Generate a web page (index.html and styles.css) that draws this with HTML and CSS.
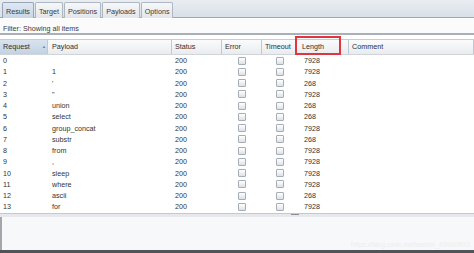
FILE: index.html
```html
<!DOCTYPE html>
<html>
<head>
  <title>Intruder Results</title>
  <link rel="stylesheet" href="styles.css">
</head>
<body>
<div class="window">
  <div class="tabs">
    <div class="tab active">Results</div>
    <div class="tab">Target</div>
    <div class="tab">Positions</div>
    <div class="tab">Payloads</div>
    <div class="tab">Options</div>
  </div>

  <div class="panel">
    <div class="filter">Filter: Showing all items</div>

    <div class="table">
      <div class="row head">
        <div class="cell sorted">Request<span class="arrow">&#9650;</span></div>
        <div class="cell">Payload</div>
        <div class="cell">Status</div>
        <div class="cell">Error</div>
        <div class="cell">Timeout</div>
        <div class="cell">Length</div>
        <div class="cell">Comment</div>
      </div>
      <div class="mark"></div>

      <div class="row"><div class="cell">0</div><div class="cell"></div><div class="cell">200</div><div class="cell box"><span></span></div><div class="cell box"><span></span></div><div class="cell">7928</div><div class="cell"></div></div>
      <div class="row"><div class="cell">1</div><div class="cell">1</div><div class="cell">200</div><div class="cell box"><span></span></div><div class="cell box"><span></span></div><div class="cell">7928</div><div class="cell"></div></div>
      <div class="row"><div class="cell">2</div><div class="cell">'</div><div class="cell">200</div><div class="cell box"><span></span></div><div class="cell box"><span></span></div><div class="cell">268</div><div class="cell"></div></div>
      <div class="row"><div class="cell">3</div><div class="cell">"</div><div class="cell">200</div><div class="cell box"><span></span></div><div class="cell box"><span></span></div><div class="cell">7928</div><div class="cell"></div></div>
      <div class="row"><div class="cell">4</div><div class="cell">union</div><div class="cell">200</div><div class="cell box"><span></span></div><div class="cell box"><span></span></div><div class="cell">268</div><div class="cell"></div></div>
      <div class="row"><div class="cell">5</div><div class="cell">select</div><div class="cell">200</div><div class="cell box"><span></span></div><div class="cell box"><span></span></div><div class="cell">268</div><div class="cell"></div></div>
      <div class="row"><div class="cell">6</div><div class="cell">group_concat</div><div class="cell">200</div><div class="cell box"><span></span></div><div class="cell box"><span></span></div><div class="cell">7928</div><div class="cell"></div></div>
      <div class="row"><div class="cell">7</div><div class="cell">substr</div><div class="cell">200</div><div class="cell box"><span></span></div><div class="cell box"><span></span></div><div class="cell">268</div><div class="cell"></div></div>
      <div class="row"><div class="cell">8</div><div class="cell">from</div><div class="cell">200</div><div class="cell box"><span></span></div><div class="cell box"><span></span></div><div class="cell">7928</div><div class="cell"></div></div>
      <div class="row"><div class="cell">9</div><div class="cell">,</div><div class="cell">200</div><div class="cell box"><span></span></div><div class="cell box"><span></span></div><div class="cell">7928</div><div class="cell"></div></div>
      <div class="row"><div class="cell">10</div><div class="cell">sleep</div><div class="cell">200</div><div class="cell box"><span></span></div><div class="cell box"><span></span></div><div class="cell">7928</div><div class="cell"></div></div>
      <div class="row"><div class="cell">11</div><div class="cell">where</div><div class="cell">200</div><div class="cell box"><span></span></div><div class="cell box"><span></span></div><div class="cell">7928</div><div class="cell"></div></div>
      <div class="row"><div class="cell">12</div><div class="cell">ascii</div><div class="cell">200</div><div class="cell box"><span></span></div><div class="cell box"><span></span></div><div class="cell">268</div><div class="cell"></div></div>
      <div class="row"><div class="cell">13</div><div class="cell">for</div><div class="cell">200</div><div class="cell box"><span></span></div><div class="cell box"><span></span></div><div class="cell">7928</div><div class="cell"></div></div>
    </div>

    <div class="splitter"><span class="grip"></span></div>
    <div class="lower">
      <span class="watermark">https://blog.csdn.net/weixin_43940853</span>
    </div>
  </div>
  <div class="taskbar"></div>
</div>
</body>
</html>
```

FILE: styles.css
```css
body {
  margin: 0;
  font-family: "Liberation Sans", Arial, sans-serif;
  font-size: 7.2px;
  color: #333;
  background-color: #f4f5f7;
}

.window {
  width: 474px;
  height: 253px;
  display: flex;
  flex-direction: column;
  overflow: hidden;
  position: relative;
}

.tabs {
  display: flex;
  gap: 1px;
  height: 18px;
  padding: 2px 0 0 2px;
  box-sizing: border-box;
  background: linear-gradient(#e9edf2, #d9e0e8);
  border-bottom: 1px solid #9aa7b5;
}

.tab {
  padding: 4px 3px 0 3px;
  box-sizing: border-box;
  height: 16px;
  color: #3a3a3a;
  background: linear-gradient(#f6f7f9, #e2e6eb);
  border: 1px solid #aeb7c2;
  border-bottom: none;
  border-radius: 2px 2px 0 0;
}

.tab.active {
  background: linear-gradient(#dfe8f3, #c9d6e5);
  border-color: #97a6b8;
}

.panel {
  flex: 1;
  display: flex;
  flex-direction: column;
  background-color: #ffffff;
  position: relative;
}

.filter {
  height: 16px;
  margin-top: 1px;
  padding: 5px 0 0 3px;
  box-sizing: border-box;
  background-color: #fbfbfc;
  border-bottom: 2px solid #a9b0b8;
  color: #3a3a3a;
}

.table {
  margin-top: 4px;
  position: relative;
  background-color: #ffffff;
}

.row {
  display: grid;
  grid-template-columns: 48px 124px 50px 40px 35px 52px 1fr;
  height: 11.25px;
  line-height: 11.25px;
}

.cell {
  padding-left: 3px;
  white-space: nowrap;
  overflow: hidden;
}

.row .cell:nth-child(2) {
  padding-left: 4px;
}

.row .cell:nth-child(6) {
  padding-left: 7px;
}

.head {
  height: 14px;
  line-height: 14px;
  background: linear-gradient(#fbfbfc, #e9ecef);
  border-top: 1px solid #c6ccd3;
  border-bottom: 1px solid #d0d5da;
  color: #2f2f2f;
}

.head .cell {
  border-right: 1px solid #c3c8ce;
}

.head .cell.sorted {
  background: linear-gradient(#d8e3ef, #c3d2e3);
  position: relative;
}

.arrow {
  position: absolute;
  left: 42px;
  top: 0;
  font-size: 4px;
  color: #6f7c8a;
}

.head .cell:nth-child(6) {
  padding-left: 5px;
}

.box {
  display: flex;
  align-items: center;
  justify-content: center;
  padding-left: 0;
}

.box span {
  width: 6px;
  height: 6px;
  border: 1px solid #a7adb4;
  border-radius: 1px;
  background: linear-gradient(#ffffff, #dde1e6);
}

.mark {
  position: absolute;
  left: 295px;
  top: -3px;
  width: 42px;
  height: 15px;
  border: 2px solid #e0353f;
}

.splitter {
  height: 3px;
  background-color: #e6e8eb;
  border-top: 1px solid #c4c9ce;
  position: relative;
}

.grip {
  position: absolute;
  left: 291px;
  top: 0;
  width: 8px;
  height: 1px;
  background-color: #8a9097;
}

.lower {
  flex: 1;
  background-color: #f7f8f9;
  border-left: 2px solid #a3a7ab;
  position: relative;
}

.watermark {
  position: absolute;
  right: 4px;
  bottom: 2px;
  font-size: 7px;
  color: #eceef0;
}

.taskbar {
  height: 3px;
  background-color: #505357;
}
```
